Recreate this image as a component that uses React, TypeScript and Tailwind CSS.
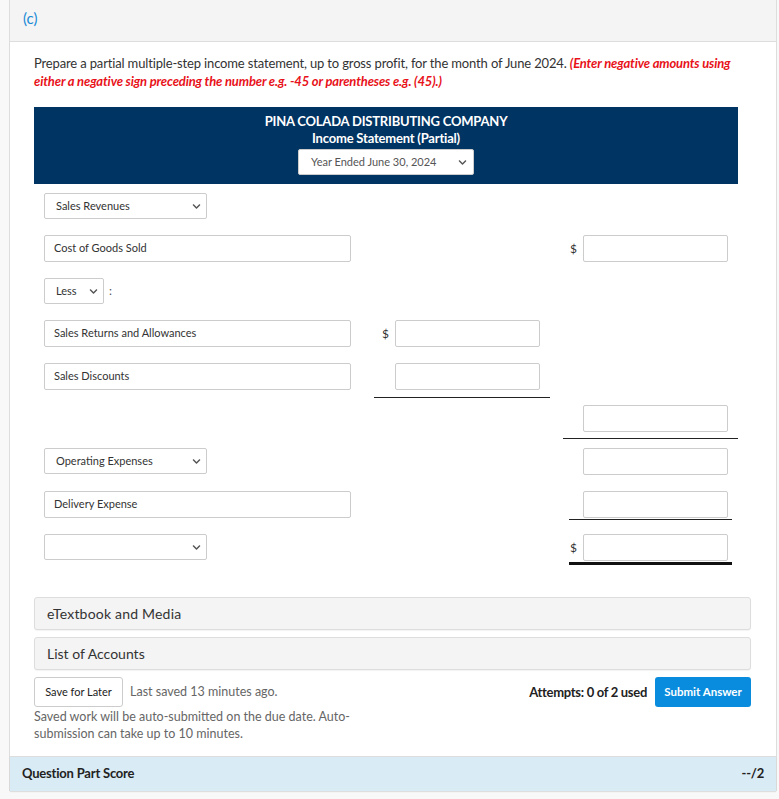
import { FaChevronDown } from 'react-icons/fa';

function Select({ label, width }: { label: string; width: string }) {
  return (
    <div className={`relative flex h-[26px] items-center rounded-[2px] border border-[#ccc] bg-white pl-[11px] text-[11px] text-[#333] ${width}`}>
      <span>{label}</span>
      <FaChevronDown className="absolute right-[5px] h-[9px] w-[9px] text-[#555]" />
    </div>
  );
}

function TextBox({ label }: { label: string }) {
  return (
    <div className="flex h-[27px] w-[307px] items-center rounded-[2px] border border-[#ccc] bg-white pl-[9px] text-[11px] text-[#333]">
      {label}
    </div>
  );
}

function Amount({ dollar }: { dollar?: boolean }) {
  return (
    <div className="flex items-center">
      <span className="w-[13px] text-[12px] text-[#333]">{dollar ? '$' : ''}</span>
      <div className="h-[27px] w-[145px] rounded-[2px] border border-[#ccc] bg-white" />
    </div>
  );
}

export default function App() {
  return (
    <div className="min-h-screen bg-[#f8f8f8] pl-[9px] pr-[2px] font-['Lato','Open_Sans',sans-serif] text-[#333]">
      <div className="border-x border-[#ddd] bg-white">
        <div className="h-[42px] border-b border-[#ddd] bg-[#f4f4f4] pl-[13px] pt-[7px] text-[15px] text-[#1b8ad6]">(c)</div>

        <div className="pl-[24px] pr-[25px] pt-[12px]">
          <p className="w-[700px] text-[13px] leading-[18px] tracking-[-0.15px] text-[#333]">
            Prepare a partial multiple-step income statement, up to gross profit, for the month of June 2024.{' '}
            <span className="font-bold italic text-[#e8121a]">
              (Enter negative amounts using either a negative sign preceding the number e.g. -45 or parentheses e.g. (45).)
            </span>
          </p>

          <div className="mt-[17px] w-[704px]">
            <div className="flex flex-col items-center bg-[#003462] pb-[9px] pt-[6px] text-white">
              <div className="text-[13px] font-bold leading-[17px] tracking-[-0.2px]">PINA COLADA DISTRIBUTING COMPANY</div>
              <div className="text-[13px] font-bold leading-[17px] tracking-[-0.2px]">Income Statement (Partial)</div>
              <div className="relative mt-[2px] flex h-[26px] w-[176px] items-center rounded-[2px] border border-[#ccc] bg-white pl-[12px] text-[11px] text-[#555]">
                Year Ended June 30, 2024
                <FaChevronDown className="absolute right-[6px] h-[9px] w-[9px] text-[#555]" />
              </div>
            </div>

            <div className="mt-[9px] flex flex-col">
              <div className="flex h-[42px] pl-[10px]">
                <Select label="Sales Revenues" width="w-[163px]" />
              </div>
              <div className="flex h-[43px] pl-[10px]">
                <TextBox label="Cost of Goods Sold" />
                <div className="ml-[219px]"><Amount dollar /></div>
              </div>
              <div className="flex h-[42px] items-start pl-[10px]">
                <Select label="Less" width="w-[60px]" />
                <span className="ml-[5px] mt-[4px] text-[12px] text-[#555]">:</span>
              </div>
              <div className="flex h-[43px] pl-[10px]">
                <TextBox label="Sales Returns and Allowances" />
                <div className="ml-[31px]"><Amount dollar /></div>
              </div>
              <div className="flex h-[42px] pl-[10px]">
                <TextBox label="Sales Discounts" />
                <div className="ml-[23px] flex h-[35px] w-[176px] items-start justify-end border-b border-[#222] pr-[10px]">
                  <div className="h-[27px] w-[145px] rounded-[2px] border border-[#ccc] bg-white" />
                </div>
              </div>
              <div className="flex h-[43px] pl-[529px]">
                <div className="flex h-[34px] w-[175px] items-start border-b border-[#222] pl-[7px]">
                  <Amount />
                </div>
              </div>
              <div className="flex h-[43px] pl-[10px]">
                <Select label="Operating Expenses" width="w-[163px]" />
                <div className="ml-[363px]"><Amount /></div>
              </div>
              <div className="flex h-[43px] pl-[10px]">
                <TextBox label="Delivery Expense" />
                <div className="ml-[218px] flex h-[29px] w-[163px] items-start border-b border-[#222] pl-[1px]">
                  <Amount />
                </div>
              </div>
              <div className="flex h-[42px] pl-[10px]">
                <Select label="" width="w-[163px]" />
                <div className="ml-[362px] flex h-[31px] w-[163px] items-start border-b-[3px] border-[#111] pl-[1px]">
                  <Amount dollar />
                </div>
              </div>
            </div>
          </div>

          <div className="mt-[21px] flex flex-col gap-[7px]">
            <div className="flex h-[33px] items-center rounded-[3px] border border-[#ddd] bg-[#f4f4f4] pl-[12px] text-[14px] tracking-[0.2px] text-[#333] shadow-[0_1px_1px_rgba(0,0,0,0.05)]">
              eTextbook and Media
            </div>
            <div className="flex h-[33px] items-center rounded-[3px] border border-[#ddd] bg-[#f4f4f4] pl-[12px] text-[14px] text-[#333] shadow-[0_1px_1px_rgba(0,0,0,0.05)]">
              List of Accounts
            </div>
          </div>

          <div className="mt-[7px] flex items-start justify-between">
            <div>
              <div className="flex items-start">
                <div className="flex h-[30px] w-[89px] items-center justify-center rounded-[3px] border border-[#ccc] bg-white text-[11px] text-[#222]">
                  Save for Later
                </div>
                <span className="ml-[7px] mt-[6px] text-[12.5px] text-[#666]">Last saved 13 minutes ago.</span>
              </div>
              <p className="mt-[1px] w-[330px] text-[12.5px] leading-[17px] text-[#666]">
                Saved work will be auto-submitted on the due date. Auto-submission can take up to 10 minutes.
              </p>
            </div>
            <div className="flex items-start">
              <span className="mt-[6px] text-[13px] font-bold tracking-[-0.3px] text-[#222]">Attempts: 0 of 2 used</span>
              <div className="ml-[8px] flex h-[30px] w-[96px] items-center justify-center rounded-[3px] bg-[#0a8cde] text-[11.5px] font-bold text-white">
                Submit Answer
              </div>
            </div>
          </div>
        </div>

        <div className="mt-[14px] flex h-[35px] items-center justify-between border-t border-[#ddd] bg-[#d9ebf5] pl-[12px] pr-[12px] text-[13px] font-bold tracking-[-0.2px] text-[#222] shadow-[0_1px_1px_rgba(0,0,0,0.1)]">
          <span>Question Part Score</span>
          <span>--/2</span>
        </div>
      </div>
    </div>
  );
}
